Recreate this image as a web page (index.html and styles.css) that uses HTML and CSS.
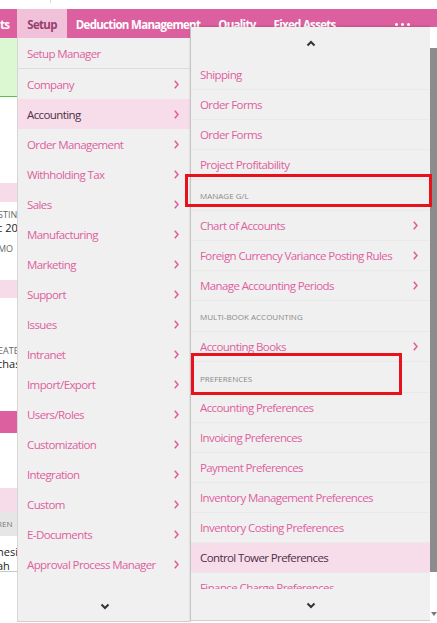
FILE: index.html
```html
<!DOCTYPE html>
<html lang="en">
<head>
    <meta charset="UTF-8">
    <meta name="viewport" content="width=device-width, initial-scale=1.0">
    <title>Setup - Accounting</title>
    <link rel="stylesheet" href="styles.css">
</head>
<body>
    <div class="page">
        <div class="topline"></div>

        <nav class="navbar">
            <span class="tab tab-cut">ts</span>
            <span class="tab active">Setup</span>
            <span class="tab">Deduction Management</span>
            <span class="tab">Quality</span>
            <span class="tab">Fixed Assets</span>
            <span class="tab more"><i></i><i></i><i></i></span>
        </nav>

        <!-- page content sitting behind the dropdowns -->
        <div class="content">
            <div class="notice"></div>
            <div class="band"></div>
            <div class="field">
                <span class="label">STING</span>
                <span class="value">c 2023</span>
            </div>
            <div class="field">
                <span class="label">MO</span>
            </div>
            <div class="band band-2"></div>
            <div class="field field-2">
                <span class="label">EATED</span>
                <span class="value">chase</span>
            </div>
            <div class="band band-dark"></div>
            <div class="band band-3"></div>
            <div class="grid-head">REN</div>
            <div class="grid-row">
                <span class="value">nesia</span>
                <span class="value">ah</span>
            </div>
        </div>

        <!-- first level: Setup -->
        <div class="menu menu-main">
            <ul class="menu-list">
                <li class="item first">Setup Manager</li>
                <li class="item sub">Company</li>
                <li class="item sub hover">Accounting</li>
                <li class="item sub">Order Management</li>
                <li class="item sub">Withholding Tax</li>
                <li class="item sub">Sales</li>
                <li class="item sub">Manufacturing</li>
                <li class="item sub">Marketing</li>
                <li class="item sub">Support</li>
                <li class="item sub">Issues</li>
                <li class="item sub">Intranet</li>
                <li class="item sub">Import/Export</li>
                <li class="item sub">Users/Roles</li>
                <li class="item sub">Customization</li>
                <li class="item sub">Integration</li>
                <li class="item sub">Custom</li>
                <li class="item sub">E-Documents</li>
                <li class="item sub">Approval Process Manager</li>
                <li class="item sub">SuiteCloud Plus</li>
            </ul>
            <div class="scroll-btn down">
                <svg width="10" height="7" viewBox="0 0 10 7"><polyline points="1.5,1.5 5,5 8.5,1.5" fill="none" stroke="#333" stroke-width="2"/></svg>
            </div>
        </div>

        <!-- second level: Accounting -->
        <div class="menu menu-sub">
            <div class="scroll-btn up">
                <svg width="10" height="7" viewBox="0 0 10 7"><polyline points="1.5,5.5 5,2 8.5,5.5" fill="none" stroke="#333" stroke-width="2"/></svg>
            </div>
            <ul class="menu-list">
                <li class="item">Shipping</li>
                <li class="item">Order Forms</li>
                <li class="item">Order Forms</li>
                <li class="item">Project Profitability</li>
                <li class="group">Manage G/L</li>
                <li class="item sub">Chart of Accounts</li>
                <li class="item sub">Foreign Currency Variance Posting Rules</li>
                <li class="item sub">Manage Accounting Periods</li>
                <li class="group">Multi-Book Accounting</li>
                <li class="item sub">Accounting Books</li>
                <li class="group group-last">Preferences</li>
                <li class="item">Accounting Preferences</li>
                <li class="item">Invoicing Preferences</li>
                <li class="item">Payment Preferences</li>
                <li class="item">Inventory Management Preferences</li>
                <li class="item">Inventory Costing Preferences</li>
                <li class="item hover">Control Tower Preferences</li>
                <li class="item">Finance Charge Preferences</li>
            </ul>
            <div class="scroll-btn down">
                <svg width="10" height="7" viewBox="0 0 10 7"><polyline points="1.5,1.5 5,5 8.5,1.5" fill="none" stroke="#333" stroke-width="2"/></svg>
            </div>
        </div>

        <div class="scrollbar">
            <div class="thumb"></div>
            <div class="arrow"></div>
        </div>

        <div class="mark mark-gl"></div>
        <div class="mark mark-pref"></div>
    </div>
</body>
</html>
```

FILE: styles.css
```css
body {
    margin: 0;
    font-family: 'Open Sans', 'DejaVu Sans', sans-serif;
    background: #fff;
}
ul {
    margin: 0;
    padding: 0;
    list-style: none;
}
.page {
    position: relative;
    width: 437px;
    height: 623px;
    overflow: hidden;
}
.topline {
    height: 9px;
    background: linear-gradient(#d8d8d8, #d8d8d8) 50px 0 / 1px 3px no-repeat;
}

/* main navigation */
.navbar {
    display: flex;
    height: 29px;
    background: #dc5f9f;
    align-items: stretch;
}
.tab {
    display: flex;
    align-items: center;
    padding: 1px 9px 0;
    color: #fff;
    font-size: 11.5px;
    font-weight: 700;
    letter-spacing: -0.7px;
    white-space: nowrap;
}
.tab-cut {
    padding-left: 0;
    padding-right: 8px;
}
.tab.active {
    padding: 1px 10px 0;
    background: #f1c1da;
    color: #96406f;
}
.tab.more {
    margin-left: auto;
    gap: 3px;
    padding-right: 27px;
}
.tab.more i {
    width: 3px;
    height: 3px;
    background: #fff;
    border-radius: 50%;
}

/* page behind the menus */
.content {
    width: 17px;
    font-size: 10px;
    line-height: 13px;
    overflow: hidden;
}
.notice {
    height: 58px;
    background: #dbf8d2;
    border-bottom: 1px solid #5cbf4a;
}
.band {
    height: 19px;
    margin-top: 86px;
    background: #f6dce9;
}
.band-2 {
    margin-top: 25px;
    height: 18px;
}
.band-dark {
    margin-top: 41px;
    height: 22px;
    background: #dc5f9f;
}
.band-3 {
    margin-top: 55px;
    height: 24px;
}
.field {
    display: flex;
    flex-direction: column;
    padding-top: 6px;
    white-space: nowrap;
}
.field + .field {
    padding-top: 8px;
}
.field-2 {
    padding-top: 46px;
}
.label {
    color: #666;
    font-size: 9px;
    text-indent: -2px;
}
.value {
    color: #222;
    font-size: 11px;
    text-indent: -3px;
}
.grid-head {
    height: 24px;
    line-height: 24px;
    background: #e6e6e6;
    color: #777;
    font-size: 8px;
    text-indent: -3px;
}
.grid-row {
    display: flex;
    flex-direction: column;
    padding-top: 9px;
    height: 26px;
    line-height: 14px;
    border-bottom: 1px solid #c8c8c8;
    white-space: nowrap;
}

/* dropdown menus */
.menu {
    position: absolute;
    display: flex;
    flex-direction: column;
    background: #f0f0f0;
    font-size: 11.5px;
    letter-spacing: -0.6px;
    box-sizing: border-box;
}
.menu-main {
    left: 17px;
    top: 38px;
    width: 174px;
    height: 584px;
    border-left: 1px solid #d6d6d6;
    border-bottom: 1px solid #cfcfcf;
}
.menu-sub {
    left: 190px;
    top: 27px;
    width: 240px;
    height: 594px;
    border-left: 1px solid #c4c4c4;
    border-bottom: 1px solid #cfcfcf;
    box-shadow: 0 -1px 2px rgba(0, 0, 0, 0.15);
}
.menu-list {
    flex: 1;
    overflow: hidden;
}
.menu-main .menu-list {
    max-height: 552px;
}
.item {
    display: flex;
    align-items: center;
    justify-content: space-between;
    height: 30px;
    padding: 0 12px 0 9px;
    color: #df5f9f;
    white-space: nowrap;
    box-sizing: border-box;
}
.item.first {
    height: 31px;
    padding-top: 1px;
    border-bottom: 1px solid #dcdcdc;
}
.menu-sub .item {
    border-bottom: 1px solid #e9e9e9;
}
.item.hover {
    background: #f7dde9;
    color: #4e3048;
}
.item.sub::after {
    content: "";
    width: 5px;
    height: 9px;
    background: url("data:image/svg+xml,%3Csvg xmlns='http://www.w3.org/2000/svg' width='5' height='9'%3E%3Cpolyline points='0.8,0.8 4,4.5 0.8,8.2' fill='none' stroke='%23df5f9f' stroke-width='1.6'/%3E%3C/svg%3E") no-repeat;
}
.group {
    display: flex;
    align-items: center;
    height: 31px;
    padding: 1px 9px 0;
    color: #8a8a8a;
    font-size: 8px;
    letter-spacing: 0;
    text-transform: uppercase;
    border-bottom: 1px solid #e9e9e9;
    box-sizing: border-box;
}
.group-last {
    padding-top: 3px;
}
.scroll-btn {
    display: flex;
    justify-content: center;
    align-items: center;
    flex-shrink: 0;
}
.scroll-btn.up {
    height: 33px;
}
.scroll-btn.down {
    height: 29px;
    padding-top: 2px;
}

/* inner scrollbar of the submenu */
.scrollbar {
    position: absolute;
    left: 430px;
    top: 27px;
    width: 7px;
    height: 596px;
    background: #fff;
}
.thumb {
    margin-top: 21px;
    height: 524px;
    background: #8c8c8c;
}
.arrow {
    margin: 40px 0 0 1px;
    width: 0;
    height: 0;
    border-left: 3px solid transparent;
    border-right: 3px solid transparent;
    border-top: 4px solid #7a7a7a;
}

/* red highlight boxes */
.mark {
    position: absolute;
    border: 3px solid #e8121c;
    box-sizing: border-box;
}
.mark-gl {
    left: 185px;
    top: 174px;
    width: 247px;
    height: 33px;
}
.mark-pref {
    left: 191px;
    top: 353px;
    width: 211px;
    height: 42px;
}
```
